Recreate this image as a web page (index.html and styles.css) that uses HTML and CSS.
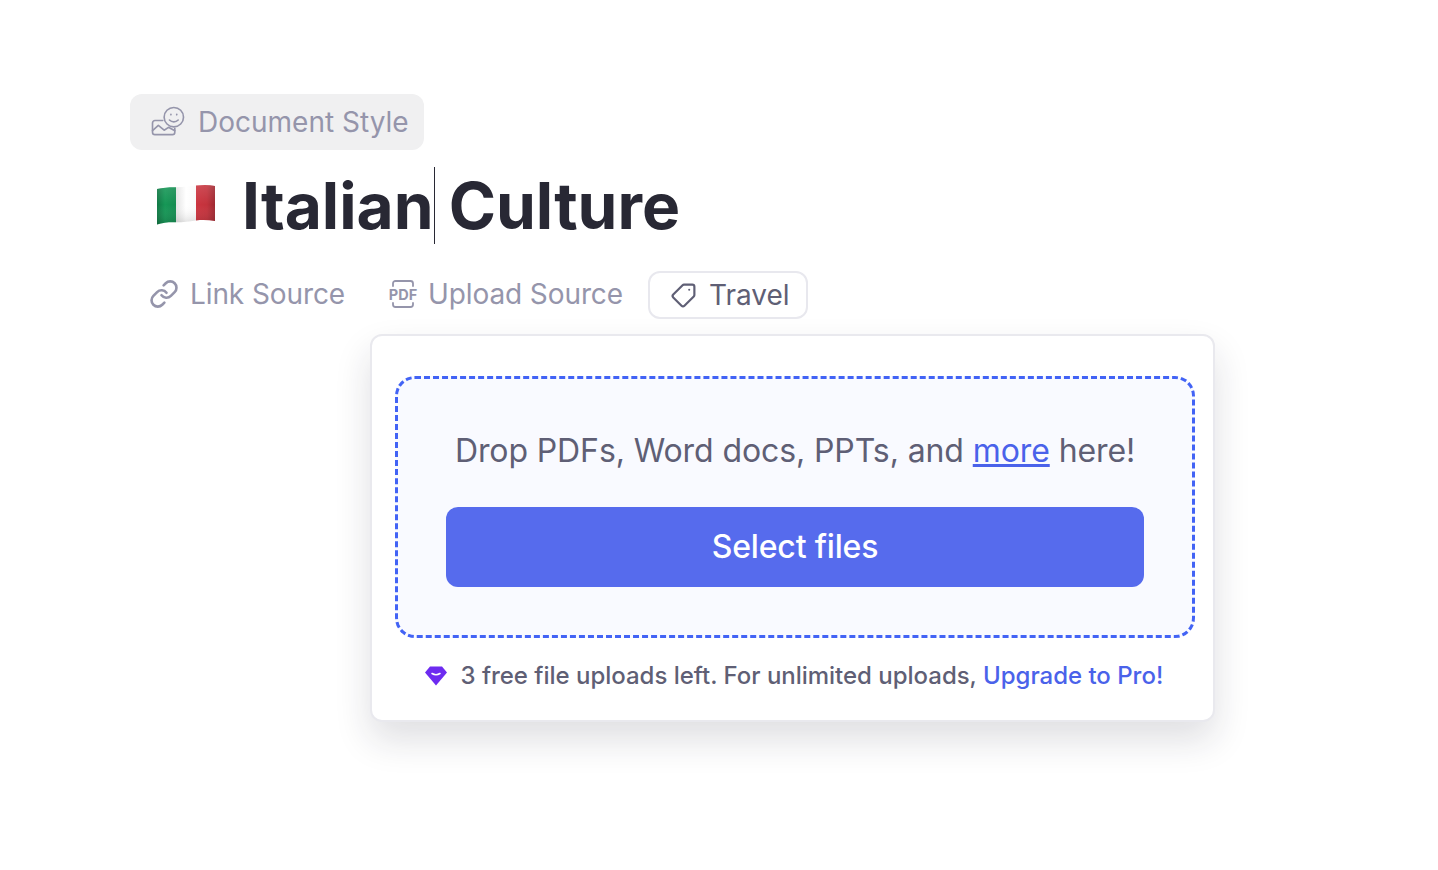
FILE: index.html
```html
<!DOCTYPE html>
<html lang="en">
<head>
<meta charset="utf-8">
<title>Italian Culture</title>
<link rel="stylesheet" href="styles.css">
</head>
<body>
<main class="page">
  <div class="style-chip">
    <svg class="chip-icon" viewBox="0 0 36 32" fill="none" stroke="#9595ab" stroke-width="1.7" stroke-linecap="round" stroke-linejoin="round">
      <path d="M12 15H4a2.500 2.500 0 0 0-2.500 2.500V27A2.500 2.500 0 0 0 4 29.500h18A2.500 2.500 0 0 0 24.500 27v-4"/>
      <path d="M1.500 25.500l6-5.500 6 5 4.500-3 6.500 3.500"/>
      <circle cx="23.500" cy="11.500" r="10"/>
      <path d="M19 14.500c2.500 2.600 6.500 2.600 9 0"/>
      <path d="M20.500 8.500v.6M26.500 8.500v.6"/>
    </svg>
    <span>Document Style</span>
  </div>

  <h1 class="title-row">
    <svg class="flag" viewBox="0 0 58 42">
      <defs>
        <linearGradient id="shade" x1="0" y1="0" x2="1" y2="0">
          <stop offset="0" stop-color="#000" stop-opacity=".22"/>
          <stop offset=".14" stop-color="#000" stop-opacity=".02"/>
          <stop offset=".34" stop-color="#000" stop-opacity=".1"/>
          <stop offset=".5" stop-color="#000" stop-opacity="0"/>
          <stop offset=".68" stop-color="#000" stop-opacity=".02"/>
          <stop offset=".86" stop-color="#000" stop-opacity=".06"/>
          <stop offset="1" stop-color="#000" stop-opacity=".24"/>
        </linearGradient>
        <linearGradient id="edge" x1="0" y1="0" x2="0" y2="1">
          <stop offset="0" stop-color="#fff" stop-opacity=".12"/>
          <stop offset=".5" stop-color="#fff" stop-opacity="0"/>
          <stop offset="1" stop-color="#000" stop-opacity=".14"/>
        </linearGradient>
      </defs>
      <path fill="#169a58" d="M0 5c6-1.300 12-1.800 19-1.700v35c-7-.200-13 .300-19 2.200z"/>
      <path fill="#fff" d="M19 3.300c7 .100 13-.800 20-1.700v34.800c-7 1-13 1.900-20 1.900z"/>
      <path fill="#cf3540" d="M39 1.600c6-.700 13-.800 19 .300v35.100c-6-1.200-13-1.400-19-.600z"/>
      <path fill="url(#shade)" d="M0 5c6-1.300 12-1.800 19-1.700 7 .100 13-.800 20-1.700 6-.700 13-.800 19 .300v35.100c-6-1.200-13-1.400-19-.600-7 1-13 1.900-20 1.900-7-.200-13 .300-19 2.200z"/>
      <path fill="url(#edge)" d="M0 5c6-1.300 12-1.800 19-1.700 7 .100 13-.800 20-1.700 6-.700 13-.800 19 .300v35.100c-6-1.200-13-1.400-19-.600-7 1-13 1.900-20 1.900-7-.200-13 .300-19 2.200z"/>
    </svg>
    <span class="title-text">Italian<span class="caret"></span> Culture</span>
  </h1>

  <div class="meta-row">
    <div class="source-item link-source">
      <svg class="link-icon" viewBox="0 0 24 24" fill="none" stroke="#9595ab" stroke-width="2.100" stroke-linecap="round" stroke-linejoin="round">
        <path d="M10 13a5 5 0 0 0 7.500.5l3-3a5 5 0 0 0-7.100-7.100l-1.700 1.700"/>
        <path d="M14 11a5 5 0 0 0-7.500-.5l-3 3a5 5 0 0 0 7.100 7.100l1.700-1.700"/>
      </svg>
      <span>Link Source</span>
    </div>
    <div class="source-item upload-source">
      <svg class="pdf-icon" viewBox="0 0 30 30" fill="none" stroke="#9595ab" stroke-width="1.800" stroke-linecap="round">
        <path d="M5 7V4.500A2.500 2.500 0 0 1 7.500 2h15A2.500 2.500 0 0 1 25 4.500V7"/>
        <path d="M5 24v1.500A2.500 2.500 0 0 0 7.500 28h15a2.500 2.500 0 0 0 2.500-2.500V24"/>
        <text class="pdf-label" x="15" y="20.500" text-anchor="middle">PDF</text>
      </svg>
      <span>Upload Source</span>
    </div>
    <div class="tag">
      <svg class="tag-icon" viewBox="0 0 28 28" fill="none" stroke="#5f5f75" stroke-width="2.100" stroke-linejoin="round">
        <path d="M14.500 3.500h8a2 2 0 0 1 2 2v8a2 2 0 0 1-.6 1.400l-9 9a2 2 0 0 1-2.800 0l-8-8a2 2 0 0 1 0-2.800l9-9a2 2 0 0 1 1.400-.600z"/>
        <circle cx="19.500" cy="8.500" r="1" fill="#5f5f75" stroke="none"/>
      </svg>
      <span>Travel</span>
    </div>
  </div>

  <section class="popover">
    <div class="dropzone">
      <p class="drop-text">Drop PDFs, Word docs, PPTs, and <a class="more" href="#">more</a> here!</p>
      <button class="select-btn" type="button">Select files</button>
    </div>
    <p class="upsell">
      <svg class="gem" viewBox="0 0 22 20">
        <path fill="#6d2bf0" d="M5 .5h12L22 6.500 11 19.500 0 6.500z"/>
        <path fill="none" stroke="#fff" stroke-width="1.500" stroke-linecap="round" d="M7 7.500c2.500 1.600 5.500 1.600 8 0"/>
      </svg>
      <span>3 free file uploads left. For unlimited uploads, <a class="upgrade" href="#">Upgrade to Pro!</a></span>
    </p>
  </section>
</main>
</body>
</html>
```

FILE: styles.css
```css
* { box-sizing: border-box; }

html, body {
  margin: 0;
  background: #fff;
}

body {
  font-family: Inter, "Liberation Sans", sans-serif;
  height: 870px;
  overflow: hidden;
}

.page {
  position: relative;
  padding: 94px 0 0 130px;
}

.style-chip {
  display: flex;
  align-items: center;
  gap: 12px;
  height: 56px;
  width: 294px;
  padding-left: 21px;
  border-radius: 12px;
  background: #f0f0f1;
  color: #9595ab;
  font-size: 28px;
  white-space: nowrap;
}

.chip-icon {
  width: 35px;
  height: 31px;
  flex: none;
  margin-bottom: 2px;
}

.title-row {
  display: flex;
  align-items: center;
  height: 78px;
  margin: 17px 0 0;
  padding-left: 27px;
  color: #282834;
  font-size: 64px;
  font-weight: 700;
  line-height: 78px;
}

.flag {
  width: 58px;
  height: 42px;
  flex: none;
  margin: -2px 27px 0 0;
}

.title-text {
  position: relative;
  display: block;
  white-space: pre;
}

.caret {
  position: absolute;
  top: 0;
  width: 1.500px;
  height: 77px;
  background: #282834;
}

.meta-row {
  display: flex;
  align-items: center;
  height: 48px;
  margin-top: 26px;
  padding-left: 19px;
  color: #9595ab;
  font-size: 28px;
  white-space: nowrap;
}

.source-item {
  display: flex;
  align-items: center;
  margin-bottom: 2px;
  letter-spacing: -.1px;
}

.link-source {
  gap: 11px;
  width: 239px;
}

.upload-source {
  gap: 10px;
  width: 260px;
}

.link-icon {
  width: 30px;
  height: 30px;
  flex: none;
}

.pdf-icon {
  width: 30px;
  height: 30px;
  flex: none;
}

.pdf-label {
  fill: #9595ab;
  stroke: none;
  font-family: Inter, "Liberation Sans", sans-serif;
  font-size: 14.500px;
  font-weight: 700;
  letter-spacing: 0;
}

.tag {
  display: flex;
  align-items: center;
  gap: 11px;
  width: 160px;
  height: 48px;
  padding-left: 19px;
  border: 2px solid #e8e8ee;
  border-radius: 12px;
  color: #5f5f75;
}

.tag-icon {
  width: 29px;
  height: 29px;
  flex: none;
}

.popover {
  position: absolute;
  top: 334px;
  left: 370px;
  width: 845px;
  height: 388px;
  padding: 40px 18px 0 23px;
  border: 2px solid #e9e9ee;
  border-radius: 12px;
  background: #fff;
  box-shadow: 0 18px 36px rgba(30, 30, 50, .14);
}

.dropzone {
  display: flex;
  flex-direction: column;
  align-items: center;
  height: 262px;
  padding-top: 52px;
  border: 3px dashed #4263f5;
  border-radius: 20px;
  background: #f9faff;
}

.drop-text {
  margin: 0 0 36px;
  color: #5f5f75;
  font-size: 32px;
  letter-spacing: -.1px;
  line-height: 40px;
  white-space: nowrap;
}

.more {
  color: #4a62ea;
}

.select-btn {
  width: 698px;
  height: 80px;
  padding: 0 0 2px;
  border: 0;
  border-radius: 12px;
  background: #566bed;
  color: #fff;
  font: 500 32px Inter, "Liberation Sans", sans-serif;
  letter-spacing: -.18px;
}

.upsell {
  display: flex;
  align-items: center;
  gap: 13.500px;
  margin: 22px 0 0;
  padding-left: 30px;
  color: #5f5f75;
  font-size: 24px;
  font-weight: 500;
  letter-spacing: -.02px;
  line-height: 32px;
  white-space: nowrap;
}

.gem {
  width: 22px;
  height: 20px;
  flex: none;
}

.upgrade {
  color: #4a62ea;
  text-decoration: none;
}
```
